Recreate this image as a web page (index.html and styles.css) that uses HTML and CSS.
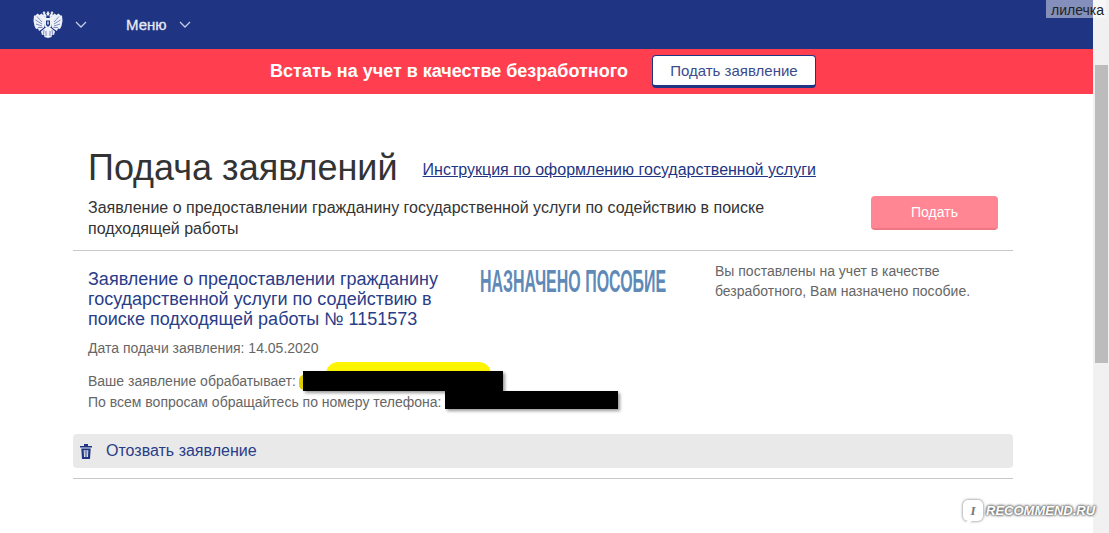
FILE: index.html
```html
<!DOCTYPE html>
<html lang="ru">
<head>
    <meta charset="UTF-8">
    <meta name="viewport" content="width=device-width, initial-scale=1.0">
    <title>Подача заявлений</title>
    <link rel="stylesheet" href="styles.css">
</head>
<body>
    <div class="page">
        <!-- Верхнее меню -->
        <header class="topbar">
            <svg class="emblem" viewBox="0 0 30 28" width="30" height="28">
                <g id="wing">
                    <path d="M12 7L8.500 3.500L6.500 5L4.500 3.500L2.500 5.500L1 5.500L.5 11L1.500 16L3 19L5 18.500L6 21L8.500 19.500L11 17.500L12.500 12Z" fill="#eef0f8"/>
                    <path d="M4 6.500L9 12M2.500 10L9 14M3 14L9 16M5 17.500L9.500 17.500" fill="none" stroke="#5f70ad" stroke-width=".8"/>
                    <path d="M13 9.500L11.500 6.500L9 5.500L11.500 3.500L13.500 5Z" fill="#eef0f8"/>
                    <path d="M12 18L8 21.500L9 25L11 24.500L11.500 27L15 28V18Z" fill="#eef0f8"/>
                    <path d="M11 20L10.500 24M13 21L13 26" fill="none" stroke="#5f70ad" stroke-width=".8"/>
                </g>
                <use href="#wing" transform="matrix(-1 0 0 1 30 0)"/>
                <path d="M13.500 3.500L15 .8L16.500 3.500L15.800 5.500H14.200Z" fill="#eef0f8"/>
                <path d="M9.500 3l1.500-2 1.500 2-1 1.500zM20.500 3l-1.500-2-1.500 2 1 1.500z" fill="#eef0f8"/>
                <path d="M12 8H18L18.500 16L15 21L11.500 16Z" fill="#eef0f8"/>
                <path d="M13 10.500H17V15L15 17L13 15Z" fill="#1f3584"/>
                <path d="M14.300 11.500h1.400v3h-1.400z" fill="#eef0f8"/>
            </svg>
            <svg class="chevron chevron-first" viewBox="0 0 12 7" width="12" height="7"><path d="M1 1l5 5 5-5"/></svg>
            <span class="menu-label">Меню</span>
            <svg class="chevron" viewBox="0 0 12 7" width="12" height="7"><path d="M1 1l5 5 5-5"/></svg>
        </header>

        <!-- Красная полоса -->
        <div class="promo">
            <span class="promo-title">Встать на учет в качестве безработного</span>
            <button class="promo-btn">Подать заявление</button>
        </div>

        <main class="content">
            <div class="heading">
                <h1>Подача заявлений</h1>
                <a href="#" class="guide-link">Инструкция по оформлению государственной услуги</a>
            </div>
            <div class="service">
                <p class="service-name">Заявление о предоставлении гражданину государственной услуги по содействию в поиске подходящей работы</p>
                <button class="submit-btn">Подать</button>
            </div>

            <section class="application">
                <div class="application-row">
                    <h2>Заявление о предоставлении гражданину государственной услуги по содействию в поиске подходящей работы № 1151573</h2>
                    <div class="status">НАЗНАЧЕНО ПОСОБИЕ</div>
                    <p class="status-note">Вы поставлены на учет в качестве безработного, Вам назначено пособие.</p>
                </div>
                <p class="meta meta-date">Дата подачи заявления: 14.05.2020</p>
                <p class="meta">Ваше заявление обрабатывает:<span class="hidden-name"><span class="marker"></span><span class="marker-edge"></span><span class="redact redact-name"></span></span></p>
                <p class="meta">По всем вопросам обращайтесь по номеру телефона:<span class="redact redact-phone"></span></p>
            </section>

            <div class="withdraw-wrap">
                <div class="withdraw">
                    <svg class="trash" viewBox="0 0 14 16" width="14" height="16">
                        <path d="M1 3h12v1.500H1zM5 1h4v2H5z"/>
                        <path fill-rule="evenodd" d="M2.300 5.500h9.400L11 16H3zM4.700 7l.3 7h1l-.3-7zM6.500 7v7h1V7zM8.300 7l-.3 7h1l.3-7z"/>
                    </svg>
                    <span>Отозвать заявление</span>
                </div>
            </div>
        </main>

        <div class="watermark">
            <span class="watermark-icon">I</span>
            <span>RECOMMEND.RU</span>
        </div>
    </div>

    <div class="scrollbar"><div class="scrollbar-thumb"></div></div>
    <div class="user-tag">лилечка</div>
</body>
</html>
```

FILE: styles.css
```css
* {
    box-sizing: border-box;
}

html,
body {
    height: 533px;
    overflow: hidden;
}

body {
    display: flex;
    margin: 0;
    background-color: #fff;
    font-family: "Liberation Sans", Arial, sans-serif;
    color: #333;
}

.page {
    flex: 1;
    min-width: 0;
    position: relative;
}

/* Верхнее меню */
.topbar {
    display: flex;
    align-items: center;
    height: 49px;
    padding: 0 0 0 33px;
    background-color: #1f3584;
    color: #e8ebf5;
}

.emblem {
    margin-top: -1px;
}

.chevron {
    margin-left: 12px;
    fill: none;
    stroke: #c6cde6;
    stroke-width: 1.300;
}

.chevron-first {
    margin-left: 12px;
    margin-right: 39px;
}

.menu-label {
    font-size: 15px;
    -webkit-text-stroke: 0.300px #e8ebf5;
}

/* Красная полоса */
.promo {
    display: flex;
    justify-content: center;
    align-items: center;
    gap: 24px;
    height: 45px;
    padding-right: 7px;
    background-color: #ff3f50;
}

.promo-title {
    font-size: 18px;
    font-weight: bold;
    color: #fff;
}

.promo-btn {
    width: 164px;
    height: 33px;
    border: 1px solid #1f3584;
    border-bottom-width: 3px;
    border-radius: 4px;
    background-color: #fff;
    color: #3a4a8c;
    font-family: inherit;
    font-size: 15px;
}

.content {
    padding: 52px 80px 0 73px;
}

.heading {
    display: flex;
    align-items: flex-end;
    gap: 25px;
    padding-left: 15px;
}

h1 {
    margin: 0;
    font-size: 36px;
    font-weight: 400;
    line-height: 44px;
}

.guide-link {
    margin-bottom: 11px;
    font-size: 16px;
    color: #1f3584;
}

.service {
    display: flex;
    justify-content: space-between;
    align-items: flex-start;
    padding: 7px 15px 11px;
    border-bottom: 1px solid #c8c8c8;
}

.service-name {
    width: 710px;
    margin: 0;
    font-size: 16px;
    line-height: 21px;
}

.submit-btn {
    width: 127px;
    height: 34px;
    margin-top: -1px;
    border: none;
    border-bottom: 2px solid #ef7683;
    border-radius: 4px;
    background-color: #ff8692;
    color: #fff;
    font-family: inherit;
    font-size: 14px;
}

.application {
    padding: 18px 15px 0;
}

.application-row {
    display: flex;
    align-items: flex-start;
}

h2 {
    width: 352px;
    margin: 0;
    font-size: 18px;
    font-weight: 400;
    line-height: 20px;
    color: #2a3d88;
}

.status {
    width: 235px;
    margin-left: 40px;
    font-size: 31px;
    font-weight: bold;
    line-height: 26px;
    color: #5f8ab8;
    white-space: nowrap;
    transform: scaleX(0.515);
    transform-origin: left top;
}

.status-note {
    width: 270px;
    margin: -8px 0 0 0;
    font-size: 14px;
    line-height: 20px;
    color: #666;
}

.meta {
    margin: 0;
    font-size: 14px;
    line-height: 21px;
    color: #666;
}

.meta-date {
    margin: 9px 0 12px;
}

.hidden-name {
    position: relative;
    display: inline-block;
    vertical-align: top;
}

.marker {
    position: absolute;
    left: 30px;
    top: -9px;
    width: 165px;
    height: 24px;
    border-radius: 12px;
    background-color: #fdf500;
}

.marker-edge {
    position: absolute;
    left: 3px;
    top: 4px;
    width: 10px;
    height: 15px;
    border-radius: 5px;
    background-color: #e0d000;
}

.redact {
    position: relative;
    display: inline-block;
    background-color: #000;
    box-shadow: 2px 2px 3px rgba(0, 0, 0, 0.4);
    vertical-align: top;
}

.redact-name {
    width: 200px;
    height: 20px;
    margin-left: 7px;
}

.redact-phone {
    width: 173px;
    height: 18px;
    margin-top: -1px;
    margin-left: 3px;
}

.withdraw-wrap {
    margin-top: 21px;
    padding-bottom: 10px;
    border-bottom: 1px solid #c8c8c8;
}

.withdraw {
    display: flex;
    align-items: center;
    gap: 13px;
    height: 34px;
    padding-left: 6px;
    border-radius: 4px;
    background-color: #e9e9e9;
    font-size: 16px;
    color: #2a3d88;
}

.trash {
    fill: #1f3584;
}

/* Водяной знак */
.watermark {
    position: absolute;
    left: 963px;
    top: 500px;
    display: flex;
    align-items: center;
    gap: 3px;
    font-size: 13px;
    font-weight: bold;
    font-style: italic;
    color: #fff;
    text-shadow: 0 0 3px #666, 0 0 3px #666, 0 0 2px #666;
}

.watermark-icon {
    position: relative;
    width: 20px;
    height: 21px;
    border-radius: 5px;
    background-color: #fff;
    box-shadow: 0 0 3px #666;
    color: #777;
    text-align: center;
    text-shadow: none;
    font-family: "Liberation Serif", serif;
    line-height: 21px;
}

.watermark-icon::after {
    content: "";
    position: absolute;
    left: 4px;
    bottom: -4px;
    border-top: 4px solid #fff;
    border-right: 5px solid transparent;
}

.scrollbar {
    flex: none;
    width: 16px;
    padding: 65px 1px 0 2px;
    background-color: #f1f1f1;
}

.scrollbar-thumb {
    height: 298px;
    background-color: #bcbcbc;
}

.user-tag {
    position: absolute;
    top: 0;
    right: 3px;
    width: 60px;
    height: 18px;
    padding-left: 5px;
    background-color: rgba(255, 255, 255, 0.45);
    font-size: 14px;
    line-height: 20px;
    color: #222;
    white-space: nowrap;
}
```
